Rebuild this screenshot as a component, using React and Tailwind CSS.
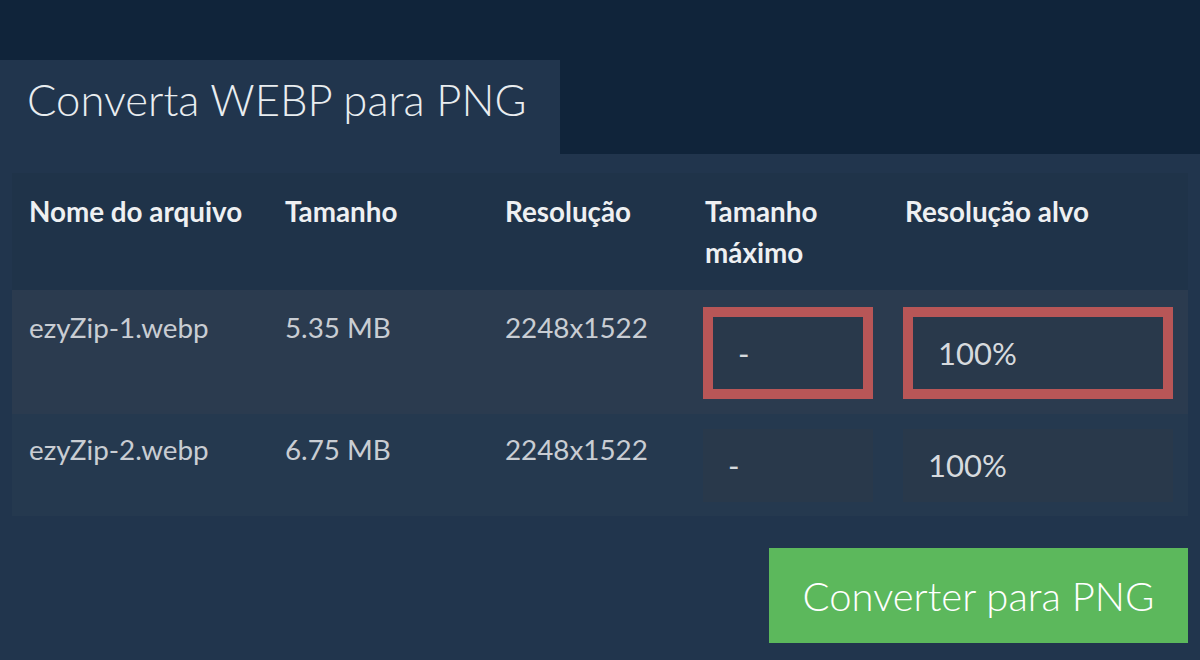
export default function App() {
  const rows = [
    { name: "ezyZip-1.webp", size: "5.35 MB", res: "2248x1522", active: true },
    { name: "ezyZip-2.webp", size: "6.75 MB", res: "2248x1522", active: false },
  ];
  return (
    <div
      className="w-[1200px] h-[660px] bg-[#10243a] flex flex-col overflow-hidden"
      style={{ fontFamily: "Lato, 'Open Sans', sans-serif" }}
    >
      <div className="h-[60px] shrink-0" />
      <div className="w-[560px] h-[94px] shrink-0 bg-[#21354d] pl-[27px] pt-[13px]">
        <h1 className="text-[43.6px] font-light text-[#e9edf0] leading-[1.2]">Converta WEBP para PNG</h1>
      </div>
      <div className="flex-1 bg-[#21354d] px-[12px] pt-[19px] flex flex-col">
        <div className="grid grid-cols-[255px_220px_200px_200px_1fr]">
          <div className="contents text-[27.8px] font-bold text-[#eef0f2] leading-[41px]">
            <div className="bg-[#1f3349] pl-[17px] pt-[18px] pb-[17px]">Nome do arquivo</div>
            <div className="bg-[#1f3349] pl-[18px] pt-[18px] pb-[17px]">Tamanho</div>
            <div className="bg-[#1f3349] pl-[18px] pt-[18px] pb-[17px]">Resolução</div>
            <div className="bg-[#1f3349] pl-[18px] pt-[18px] pb-[17px]">Tamanho<br />máximo</div>
            <div className="bg-[#1f3349] pl-[18px] pt-[18px] pb-[17px]">Resolução alvo</div>
          </div>
          {rows.map((r) => {
            const bg = r.active ? "bg-[#2b3b4f]" : "bg-[#25394f]";
            const py = r.active ? "pt-[17px] pb-[15px]" : "pt-[15px] pb-[14px]";
            const inputCls = r.active
              ? "h-[92px] border-[10px] border-[#b85657] pl-[25px]"
              : "h-[73px] pl-[25px]";
            return (
              <div key={r.name} className="contents text-[27.8px] text-[#c9cdd3] leading-[41px]">
                <div className={`${bg} ${py} pl-[17px]`}>{r.name}</div>
                <div className={`${bg} ${py} pl-[18px]`}>{r.size}</div>
                <div className={`${bg} ${py} pl-[18px]`}>{r.res}</div>
                <div className={`${bg} ${py} pl-[16px]`}>
                  <div className={`w-[170px] bg-[#29394b] flex items-center text-[31px] text-[#d6dade] ${inputCls}`}>-</div>
                </div>
                <div className={`${bg} ${py} pl-[16px]`}>
                  <div className={`w-[270px] bg-[#29394b] flex items-center text-[31px] text-[#d6dade] ${inputCls}`}>100%</div>
                </div>
              </div>
            );
          })}
        </div>
        <div className="flex justify-end mt-[32px]">
          <button className="w-[419px] h-[95px] bg-[#5cb85c] text-white text-[40px] font-light">
            Converter para PNG
          </button>
        </div>
      </div>
    </div>
  );
}
